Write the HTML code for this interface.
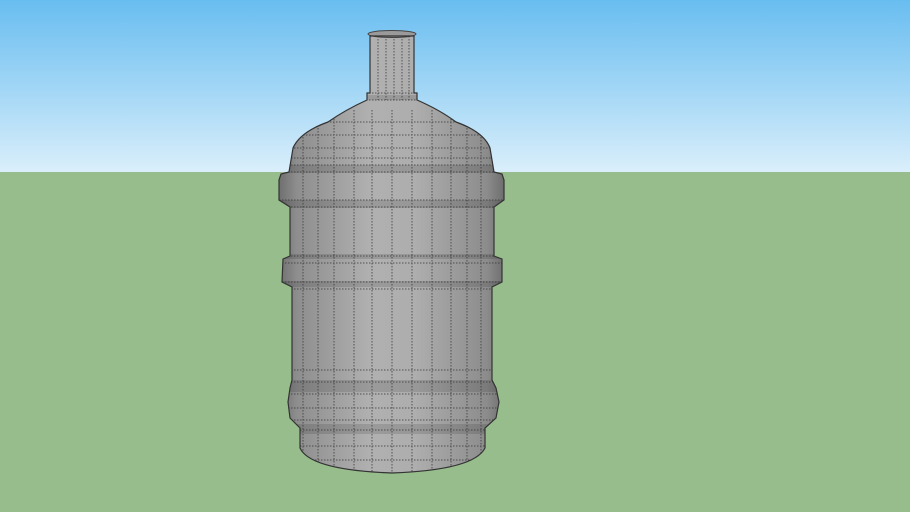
<!DOCTYPE html>
<html><head><style>html,body{margin:0;padding:0;width:910px;height:512px;overflow:hidden}</style></head>
<body>
<svg width="910" height="512" viewBox="0 0 910 512" xmlns="http://www.w3.org/2000/svg">
<defs>
<linearGradient id="sky" x1="0" y1="0" x2="0" y2="1">
<stop offset="0" stop-color="#68bdf0"/><stop offset="0.55" stop-color="#a6d8f6"/><stop offset="1" stop-color="#dbeffb"/>
</linearGradient>
<linearGradient id="g" x1="0" y1="0" x2="1" y2="0">
<stop offset="0" stop-color="#6f6f6f"/><stop offset="0.08" stop-color="#8e8e8e"/><stop offset="0.4" stop-color="#b0b0b0"/><stop offset="0.6" stop-color="#aeaeae"/><stop offset="0.92" stop-color="#8c8c8c"/><stop offset="1" stop-color="#6c6c6c"/>
</linearGradient>
<clipPath id="bc"><path id="bp" d="M370 36 L370 93 L367 93 L367 100 Q345 110 328 122 Q300 132 293 148 L289 172 L281 174 L279 180 L279 200 L290 207 L290 256 L283 259 L282 282 L292 287 L292 380 L290 388 L288 402 L290 418 L300 428 L300 448 Q310 470 392 473 Q474 470 485 448 L485 428 L496 418 L499 402 L496 388 L492 380 L492 287 L502 282 L502 259 L494 256 L494 207 L504 200 L504 180 L502 174 L494 172 L490 148 Q484 132 456 122 Q440 110 417 100 L417 93 L414 93 L414 36 Z"/></clipPath>
</defs>
<rect width="910" height="173" fill="url(#sky)"/>
<rect y="172" width="910" height="340" fill="#97bd8d"/>
<g clip-path="url(#bc)">
<rect x="279" y="28" width="226" height="450" fill="url(#g)"/>
<!-- band shading -->
<g fill="#000" opacity="0.12">
<rect x="279" y="165" width="226" height="8"/>
<rect x="279" y="200" width="226" height="8"/>
<rect x="279" y="254" width="226" height="5"/>
<rect x="279" y="281" width="226" height="6"/>
<rect x="279" y="380" width="226" height="12"/>
<rect x="279" y="424" width="226" height="10"/>
<rect x="279" y="95" width="226" height="5"/>
</g>
<g stroke="#333" stroke-width="1" stroke-dasharray="1.5 1.5" fill="none" opacity="0.75">
<path d="M378 36V100M386 36V100M394 36V100M402 36V100M409 36V100"/>
<path d="M303 110V475M318 110V475M334 110V475M354 110V475M372 110V475M392 110V475M412 110V475M432 110V475M451 110V475M467 110V475M481 110V475"/>
<path d="M279 93H505M279 100H505M279 122H505M279 135H505M279 148H505M279 158H505M279 165H505M279 172H505M279 200H505M279 207H505M279 256H505M279 263H505M279 282H505M279 289H505M279 370H505M279 382H505M279 394H505M279 408H505M279 420H505M279 430H505M279 446H505M279 460H505"/>
</g>
</g>
<ellipse cx="392" cy="34" rx="24" ry="3.5" fill="#9a9a9a" stroke="#444" stroke-width="1"/>
<use href="#bp" fill="none" stroke="#333" stroke-width="1.2"/>
</svg>
</body></html>
